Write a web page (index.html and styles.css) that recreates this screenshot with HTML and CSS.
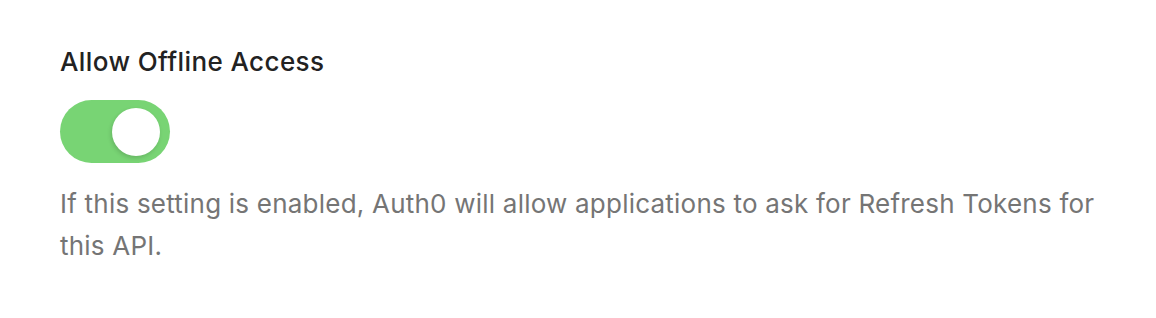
FILE: index.html
```html
<!DOCTYPE html>
<html>
<head>
<meta charset="utf-8">
<link rel="stylesheet" href="styles.css">
</head>
<body>
<div class="setting">
  <h3 class="setting-title">Allow Offline Access</h3>
  <div class="toggle on"><span class="knob"></span></div>
  <p class="setting-help">If this setting is enabled, Auth0 will allow applications to ask for Refresh Tokens for this API.</p>
</div>
</body>
</html>
```
FILE: styles.css
```css
html, body {
  margin: 0;
  background: #ffffff;
}
.setting {
  padding: 46px 60px 0 60px;
  font-family: Inter, "Noto Sans", sans-serif;
  width: 1060px;
}
.setting-title {
  margin: 0;
  font-size: 26px;
  line-height: 32px;
  font-weight: 500;
  letter-spacing: 0.4px;
  color: #222222;
}
.toggle {
  margin-top: 22px;
  width: 110px;
  height: 63px;
  border-radius: 32px;
  background: #78d474;
  display: flex;
  align-items: center;
  justify-content: flex-end;
  padding-right: 10px;
  box-sizing: border-box;
}
.knob {
  width: 48px;
  height: 48px;
  border-radius: 50%;
  background: #ffffff;
  box-shadow: -1px 2px 4px rgba(0,0,0,0.15);
}
.setting-help {
  margin: 20px 0 0 0;
  font-size: 26px;
  line-height: 42px;
  letter-spacing: 0.22px;
  color: #757575;
}
```
